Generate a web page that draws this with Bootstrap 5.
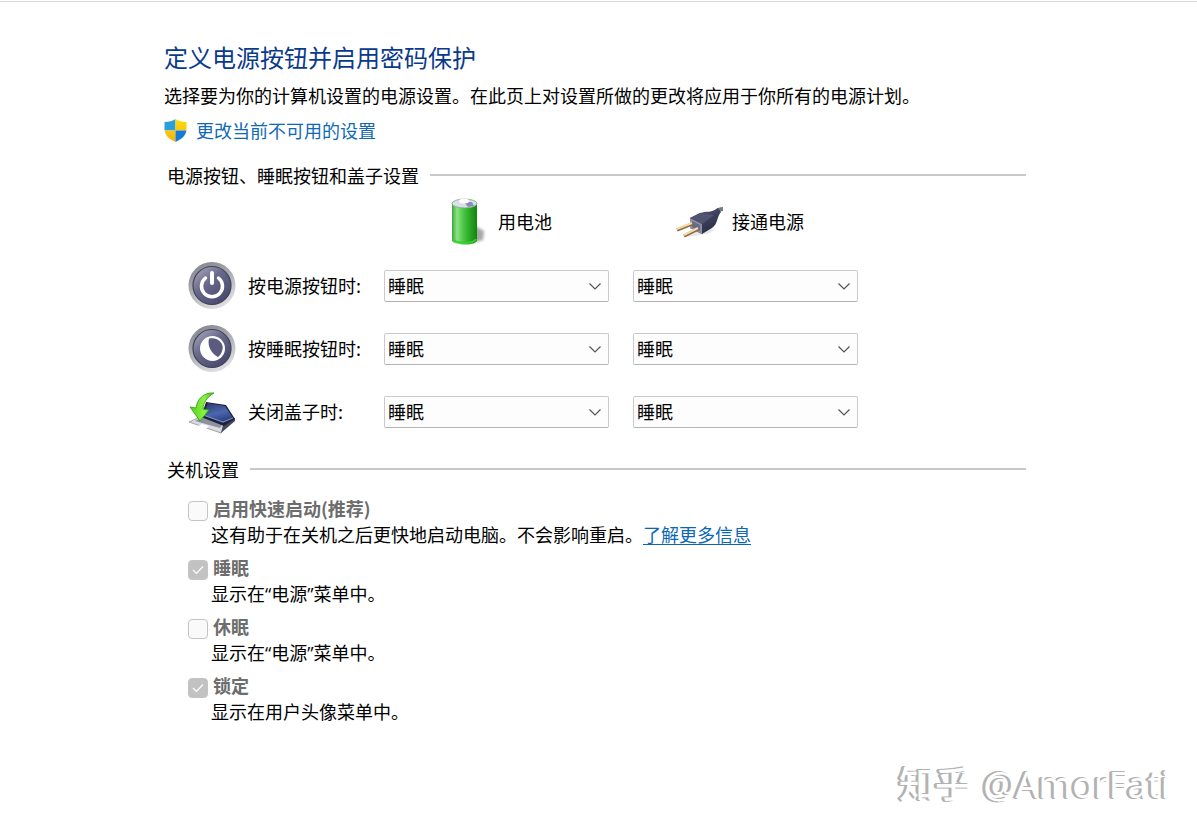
<!DOCTYPE html>
<html lang="zh-CN">
<head>
<meta charset="utf-8">
<meta name="viewport" content="width=device-width, initial-scale=1">
<title>电源选项</title>
<link href="https://cdn.jsdelivr.net/npm/bootstrap@5.3.0/dist/css/bootstrap.min.css" rel="stylesheet">
<style>
  body { font-family: "Noto Sans CJK SC", sans-serif; font-size: 18px; line-height: 26px; color: #000; background: #fff; margin-top: 1px; border-top: 1px solid #d5d9d9; }
  .page { padding: 37px 171px 0 164px; }
  .page-title { font-size: 24px; line-height: 36px; font-weight: 400; color: #0a3a8c; }
  .intro { line-height: 40px; }
  .admin-link { line-height: 30px; color: #0f69b4; gap: 9px; }
  .section-head { line-height: 28px; padding-left: 3px; gap: 11px; }
  .section-head h2 { font-size: 18px; line-height: 28px; font-weight: 400; }
  .section-head hr { border-top: 2px solid #c8c8c8; opacity: 1; }
  .power-grid { grid-template-columns: 60px 136px minmax(0, 249px) minmax(0, 249px); grid-template-rows: 65px; grid-auto-rows: 63px; padding-left: 24px; }
  .row-label { line-height: 26px; padding-bottom: 1px; }
  .power-grid .form-select { height: 32px; padding: 0 28px 1px 3px; font-size: 18px; line-height: 28px; color: #000; border: 1px solid #cacaca; border-bottom-color: #b4b4b4; border-radius: 2px; background-color: #fdfdfd; background-position: right 6px center; background-size: 14px 14px;
    background-image: url("data:image/svg+xml,%3csvg xmlns='http://www.w3.org/2000/svg' viewBox='0 0 14 14'%3e%3cpath fill='none' stroke='%23555' stroke-width='1.2' d='M1.5 4.5 7 10l5.500-5.500'/%3e%3c/svg%3e"); }
  .shutdown { padding: 12px 0 0 24px; gap: 7px; }
  .shutdown .form-check { padding-left: 23px; min-height: 52px; }
  .shutdown .form-check-input { width: 20px; height: 20px; margin: 6px 0 0 -23px; border: 1px solid #c4c4c4; border-radius: 4px; background-color: #fafafa; opacity: 1; }
  .shutdown .form-check-input:checked { background-color: #c2c2c2; background-size: 20px 20px;
    background-image: url("data:image/svg+xml,%3csvg xmlns='http://www.w3.org/2000/svg' viewBox='0 0 20 20'%3e%3cpath fill='none' stroke='%23fff' stroke-width='1.2' d='m5 10 3.500 3.500 6.500-7'/%3e%3c/svg%3e"); }
  .shutdown .form-check-label { font-weight: 700; color: #6d6d6d; opacity: 1 !important; padding-left: 2px; }
  .more-link { color: #0b67b2; text-underline-offset: 2px; }
  .half-quote { font-family: "Open Sans", sans-serif; line-height: 1; }
  .signature { font-size: 36px; line-height: 48px; font-weight: 500; color: #fff; text-shadow: -2px 1px 0 #b2b2b2, -2px -1px 0 #b2b2b2, -3px 0 0 #b2b2b2; padding: 34px 27px 0 0; }
  .signature .latin { font-family: "Noto Sans", sans-serif; font-weight: 400; line-height: 1; margin-left: 4px; }
</style>
</head>
<body>
<main class="page">
  <h1 class="page-title mb-0">定义电源按钮并启用密码保护</h1>
  <p class="intro mb-0">选择要为你的计算机设置的电源设置。在此页上对设置所做的更改将应用于你所有的电源计划。</p>
  <a href="#" class="admin-link d-inline-flex align-items-center align-top text-decoration-none">
    <svg width="23" height="23" viewBox="0 0 23 23" aria-hidden="true">
      <defs>
        <clipPath id="shield"><path d="M11.500 0C14 2 18 3 22.500 3V10C22.500 16 18 20 11.500 23 5 20 .5 16 .5 10V3C5 3 9 2 11.500 0z"/></clipPath>
        <linearGradient id="gold" x2="0" y2="1"><stop stop-color="#ffdb0d"/><stop offset="1" stop-color="#f5b30b"/></linearGradient>
      </defs>
      <g clip-path="url(#shield)"><path fill="#2a9fd8" d="M0 0h11.500v11.500H0z"/><path fill="url(#gold)" d="M11.500 0H23v11.500H11.500zM0 11.500h11.500V23H0z"/><path fill="#157bd6" d="M11.500 11.500H23V23H11.500z"/></g>
    </svg>
    <span>更改当前不可用的设置</span>
  </a>

  <div class="section-head d-flex align-items-center mt-3">
    <h2 class="mb-0">电源按钮、睡眠按钮和盖子设置</h2><hr class="flex-grow-1 my-0">
  </div>
  <div class="power-grid d-grid align-items-center">
    <div></div><div></div>
    <div class="d-flex align-items-center ps-5">
      <svg class="ms-3" width="50" height="50" viewBox="0 0 50 50" aria-hidden="true">
        <defs>
          <linearGradient id="cell"><stop stop-color="#3fa53c"/><stop offset=".2" stop-color="#8ee387"/><stop offset=".42" stop-color="#52c94b"/><stop offset=".75" stop-color="#25a322"/><stop offset="1" stop-color="#15820f"/></linearGradient>
          <filter id="soft" x="-50%" y="-50%" width="200%" height="200%"><feGaussianBlur stdDeviation="1.800"/></filter>
        </defs>
        <path d="M22 26 36 34 35 43 20 47z" fill="#777" opacity=".65" filter="url(#soft)"/>
        <path d="M4 6v37c0 6 25 6 25 0V6z" fill="url(#cell)"/>
        <ellipse cx="16.500" cy="6.500" rx="12.500" ry="4.500" fill="#dcdde9" stroke="#6fae73" stroke-width=".8"/>
        <path d="m16 5 4 5 6-1-2-4z" fill="#8c8cb8"/><ellipse cx="16" cy="4" rx="5" ry="2.500" fill="#fff"/>
        <path d="M5 42c2 5 21 5 23 0" fill="none" stroke="#32d329" stroke-width="2"/>
      </svg>
      <span class="row-label">用电池</span>
    </div>
    <div class="d-flex align-items-center ps-4">
      <svg width="56" height="36" viewBox="1 0 56 36" style="margin-left:19px" aria-hidden="true">
        <defs><linearGradient id="plug" x2=".6" y2="1"><stop stop-color="#5c6080"/><stop offset=".5" stop-color="#3f4360"/><stop offset="1" stop-color="#2b2d45"/></linearGradient></defs>
        <path d="m12 33 20-3 8-4-18-3z" fill="#bbb" opacity=".35"/>
        <path d="M39 10c3-2 2-5 9-5" fill="none" stroke="#777b88" stroke-width="4"/>
        <path d="m15 14 10-5c6-2 12 0 18-5l3 4c-4 4-3 12-9 16l-10 6-12-6z" fill="url(#plug)"/>
        <path d="m15 14 12 6v10l-12-6z" fill="#8d90a5"/><path d="m17 17 8 4v6l-8-4z" fill="#666a85"/>
        <path d="m15 14 10-5 14 2-12 9z" fill="#50546f"/>
        <path d="m2 26 15-6M9 32l14-7" stroke="#8c6740" stroke-width="3.500"/><path d="m2 25 15-6M9 31l14-7" stroke="#f5dba4" stroke-width="2"/>
      </svg>
      <span class="row-label">接通电源</span>
    </div>

    <svg width="48" height="48" viewBox="0 0 48 48" aria-hidden="true">
      <defs>
        <linearGradient id="rim" x2=".5" y2="1"><stop stop-color="#7c7d85"/><stop offset=".5" stop-color="#a8a9af"/><stop offset="1" stop-color="#dcdce0"/></linearGradient>
        <linearGradient id="face" x2=".8" y2="1"><stop stop-color="#b1b1c6"/><stop offset=".45" stop-color="#69698a"/><stop offset="1" stop-color="#46466c"/></linearGradient>
      </defs>
      <circle cx="24" cy="23.500" r="23.500" fill="url(#rim)"/><circle cx="24" cy="23.500" r="19" fill="url(#face)" stroke="#414156" stroke-width="1.200"/>
      <path d="M17.500 16a10.500 10.500 0 1 0 13 0" fill="none" stroke="#fff" stroke-width="3.500" stroke-linecap="round"/><path d="M24 11v10" stroke="#fff" stroke-width="4" stroke-linecap="round"/>
    </svg>
    <span class="row-label">按电源按钮时:</span>
    <div class="pe-4"><select class="form-select" aria-label="按电源按钮时:用电池"><option>睡眠</option></select></div>
    <div class="pe-4"><select class="form-select" aria-label="按电源按钮时:接通电源"><option>睡眠</option></select></div>

    <svg width="48" height="48" viewBox="0 0 48 48" aria-hidden="true">
      <circle cx="24" cy="23.500" r="23.500" fill="url(#rim)"/><circle cx="24" cy="23.500" r="19" fill="url(#face)" stroke="#414156" stroke-width="1.200"/>
      <circle cx="24.500" cy="23.500" r="12.500" fill="#fff"/><path d="M21 13.500c9-2 15 5 13.500 11-1 4-2.500 6-4.500 7.500-6-3-11-10-9-18.500z" fill="#5b5b80"/>
    </svg>
    <span class="row-label">按睡眠按钮时:</span>
    <div class="pe-4"><select class="form-select" aria-label="按睡眠按钮时:用电池"><option>睡眠</option></select></div>
    <div class="pe-4"><select class="form-select" aria-label="按睡眠按钮时:接通电源"><option>睡眠</option></select></div>

    <svg width="48" height="48" viewBox="0 0 48 48" aria-hidden="true">
      <defs>
        <linearGradient id="screen" x2=".4" y2="1"><stop stop-color="#27366b"/><stop offset=".6" stop-color="#4b67ae"/><stop offset="1" stop-color="#2d4182"/></linearGradient>
        <linearGradient id="arrow"><stop stop-color="#4bd418"/><stop offset=".6" stop-color="#8cf243"/><stop offset="1" stop-color="#35b512"/></linearGradient>
      </defs>
      <path d="m1 34 13-6 24 8-5 9z" fill="#d9dbe1" stroke="#8d919c" stroke-width=".8"/><path d="m7 33 8-4 20 7-3 4z" fill="#8d929e"/><path d="m14 36 7 2-3 3-8-3z" fill="#fff"/>
      <path d="m33 45 14-12v-3l-12 7z" fill="#45485a"/>
      <path d="m18 14 20 3 9 14-11 7-23-9z" fill="#1d2236"/><path d="m20 15 17 3 8 12-10 5-20-8z" fill="url(#screen)"/><path d="m15 27 20 7 10-4" fill="none" stroke="#7f94cc"/>
      <path d="M26 5C16 4 9 11 8 20l-6-1 10 14 9-11-6-1c0-6 4-12 11-16z" fill="url(#arrow)" stroke="#2c9b10" stroke-width=".8"/>
    </svg>
    <span class="row-label">关闭盖子时:</span>
    <div class="pe-4"><select class="form-select" aria-label="关闭盖子时:用电池"><option>睡眠</option></select></div>
    <div class="pe-4"><select class="form-select" aria-label="关闭盖子时:接通电源"><option>睡眠</option></select></div>
  </div>

  <div class="section-head d-flex align-items-center pt-2 mt-1">
    <h2 class="mb-0">关机设置</h2><hr class="flex-grow-1 my-0">
  </div>
  <div class="shutdown d-flex flex-column">
    <div class="form-check mb-0">
      <input class="form-check-input" type="checkbox" id="fast" disabled><label class="form-check-label" for="fast">启用快速启动(推荐)</label>
      <div>这有助于在关机之后更快地启动电脑。不会影响重启。<a href="#" class="more-link">了解更多信息</a></div>
    </div>
    <div class="form-check mb-0">
      <input class="form-check-input" type="checkbox" id="sleep" checked disabled><label class="form-check-label" for="sleep">睡眠</label>
      <div>显示在<span class="half-quote">“</span>电源<span class="half-quote">”</span>菜单中。</div>
    </div>
    <div class="form-check mb-0">
      <input class="form-check-input" type="checkbox" id="hibernate" disabled><label class="form-check-label" for="hibernate">休眠</label>
      <div>显示在<span class="half-quote">“</span>电源<span class="half-quote">”</span>菜单中。</div>
    </div>
    <div class="form-check mb-0">
      <input class="form-check-input" type="checkbox" id="lock" checked disabled><label class="form-check-label" for="lock">锁定</label>
      <div>显示在用户头像菜单中。</div>
    </div>
  </div>
</main>
<footer class="signature text-end">知乎 <span class="latin">@AmorFati</span></footer>
</body>
</html>
